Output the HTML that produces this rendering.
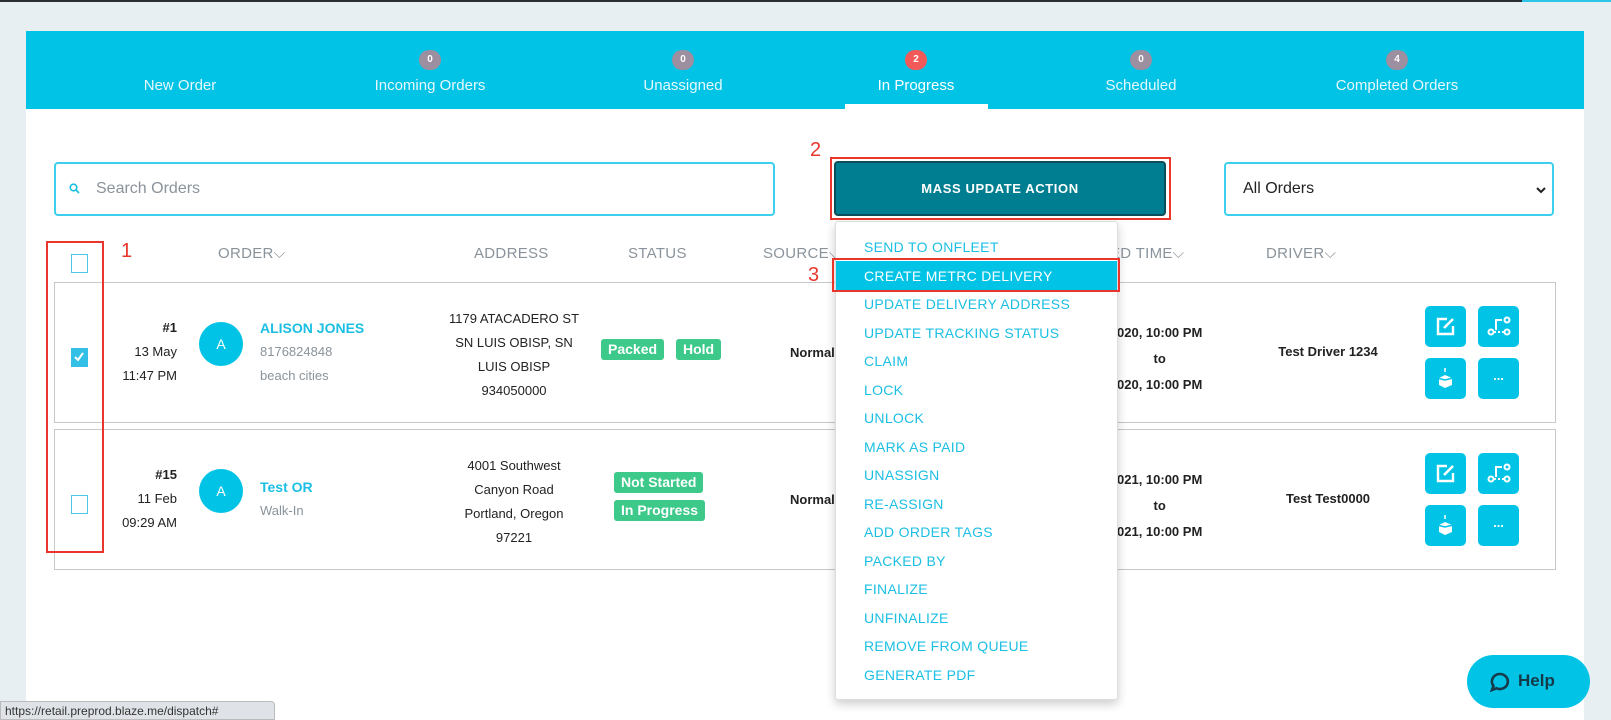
<!DOCTYPE html>
<html><head><meta charset="utf-8"><style>
*{margin:0;padding:0;box-sizing:border-box}
body{width:1611px;height:720px;overflow:hidden;background:#e8eff2;font-family:"Liberation Sans",sans-serif;position:relative}
.a{position:absolute}
.tab{position:absolute;top:31px;height:78px;text-align:center;color:#e6f8fc;font-size:15px;width:240px}
.tab .lbl{position:absolute;top:46px;left:0;right:0}
.badge{position:absolute;top:19px;left:50%;margin-left:-11px;width:22px;height:20px;border-radius:10px;background:#9b8fa0;color:#fff;font-size:10px;font-weight:bold;line-height:20px}
.hd{position:absolute;top:245px;color:#8a939b;font-size:15px;letter-spacing:.3px}
.row{position:absolute;left:54px;width:1502px;border:1px solid #c8c8c8;background:#fff}
.cb{position:absolute;width:17px;height:19px;border:1.5px solid #4cc7e6;background:#fff}
.t{position:absolute;font-size:13px;color:#222}
.av{position:absolute;width:44px;height:44px;border-radius:50%;background:#00c3e6;color:#fff;font-size:14px;text-align:center;line-height:44px}
.tag{position:absolute;background:#3cc98a;color:#fff;font-weight:bold;font-size:14px;height:21px;line-height:21px;border-radius:3px;padding:0 7px}
.btn{position:absolute;width:41px;height:41px;background:#00c3e6;border-radius:5px}
.dd{position:absolute;left:835px;top:221px;width:283px;height:479px;background:#fff;border:1px solid #ddd;border-radius:3px;box-shadow:0 4px 10px rgba(0,0,0,.2)}
.it{position:absolute;left:28px;color:#1bbfe3;font-size:14px;letter-spacing:.3px}
.red{position:absolute;border:2px solid #e8362c}
.num{position:absolute;color:#e8362c;font-size:20px}
</style></head><body>
<div class="a" style="left:0;top:0;width:1522px;height:2px;background:#2b2f33"></div>
<div class="a" style="left:1522px;top:0;width:89px;height:2px;background:#2bc5e8"></div>
<div class="a" style="left:26px;top:31px;width:1558px;height:78px;background:#00c3e6"></div>
<div class="a" style="left:26px;top:109px;width:1558px;height:611px;background:#fff"></div>

<div class="tab" style="left:60px"><div class="lbl">New Order</div></div>
<div class="tab" style="left:310px"><div class="badge">0</div><div class="lbl">Incoming Orders</div></div>
<div class="tab" style="left:563px"><div class="badge">0</div><div class="lbl">Unassigned</div></div>
<div class="tab" style="left:796px;color:#fff"><div class="badge" style="background:#f25a5a">2</div><div class="lbl">In Progress</div></div>
<div class="tab" style="left:1021px"><div class="badge">0</div><div class="lbl">Scheduled</div></div>
<div class="tab" style="left:1277px"><div class="badge">4</div><div class="lbl">Completed Orders</div></div>
<div class="a" style="left:845px;top:104px;width:143px;height:5px;background:#fff"></div>

<div class="a" style="left:54px;top:162px;width:721px;height:54px;border:2px solid #3dd0ee;border-radius:4px"></div>
<svg class="a" style="left:69px;top:183px" width="11" height="11" viewBox="0 0 11 11"><circle cx="4.5" cy="4.5" r="3.3" fill="none" stroke="#1bbfe3" stroke-width="1.6"/><path d="M7 7l3 3" stroke="#1bbfe3" stroke-width="1.8"/></svg>
<div class="a" style="left:96px;top:180px;color:#8a939b;font-size:16px">Search Orders</div>

<div class="a" style="left:834px;top:161px;width:332px;height:55px;background:#007e91;border:2px solid #0b4d5a;border-radius:4px;color:#fff;font-weight:bold;font-size:13px;letter-spacing:.6px;text-align:center;line-height:51px">MASS UPDATE ACTION</div>
<div class="red" style="left:830px;top:157px;width:341px;height:63px"></div>
<div class="num" style="left:810px;top:139px">2</div>

<div class="a" style="left:1224px;top:162px;width:330px;height:54px;border:2px solid #3dd0ee;border-radius:4px;background:#fff"></div>
<div class="a" style="left:1243px;top:180px;color:#222;font-size:16px">All Orders</div>
<svg class="a" style="left:1536px;top:186px" width="10" height="8" viewBox="0 0 10 8"><path d="M1 2l4 4 4-4" fill="none" stroke="#222" stroke-width="2"/></svg>

<div class="cb" style="left:71px;top:254px"></div>
<div class="hd" style="left:218px">ORDER⌵</div>
<div class="hd" style="left:474px">ADDRESS</div>
<div class="hd" style="left:628px">STATUS</div>
<div class="hd" style="left:763px">SOURCE⌵</div>
<div class="hd" style="left:1110px">ED TIME⌵</div>
<div class="hd" style="left:1266px">DRIVER⌵</div>

<div class="row" style="top:282px;height:141px"></div>
<div class="row" style="top:429px;height:141px"></div>

<!-- row 1 -->
<div class="cb" style="left:71px;top:348px;background:#34bfe6;border-color:#34bfe6"><svg width="14" height="16" viewBox="0 0 14 16" style="position:absolute;left:0;top:0"><path d="M3 8l3 3 5-7" fill="none" stroke="#fff" stroke-width="2"/></svg></div>
<div class="t" style="left:120px;top:320px;width:57px;text-align:right;font-weight:bold">#1</div>
<div class="t" style="left:100px;top:344px;width:77px;text-align:right">13 May</div>
<div class="t" style="left:100px;top:368px;width:77px;text-align:right">11:47 PM</div>
<div class="av" style="left:199px;top:322px">A</div>
<div class="t" style="left:260px;top:320px;color:#1bbfe3;font-weight:bold;font-size:14px">ALISON JONES</div>
<div class="t" style="left:260px;top:344px;color:#8a939b">8176824848</div>
<div class="t" style="left:260px;top:368px;color:#8a939b">beach cities</div>
<div class="t" style="left:414px;top:307px;width:200px;text-align:center;line-height:24px">1179 ATACADERO ST<br>SN LUIS OBISP, SN<br>LUIS OBISP<br>934050000</div>
<div class="tag" style="left:601px;top:339px">Packed</div>
<div class="tag" style="left:676px;top:339px">Hold</div>
<div class="t" style="left:790px;top:345px;font-weight:bold">Normal</div>
<div class="t" style="left:1117px;top:320px;font-weight:bold;line-height:26px;text-align:center">020, 10:00 PM<br>to<br>020, 10:00 PM</div>
<div class="t" style="left:1228px;top:344px;width:200px;text-align:center;font-weight:bold">Test Driver 1234</div>

<!-- row 2 -->
<div class="cb" style="left:71px;top:495px"></div>
<div class="t" style="left:120px;top:467px;width:57px;text-align:right;font-weight:bold">#15</div>
<div class="t" style="left:100px;top:491px;width:77px;text-align:right">11 Feb</div>
<div class="t" style="left:100px;top:515px;width:77px;text-align:right">09:29 AM</div>
<div class="av" style="left:199px;top:469px">A</div>
<div class="t" style="left:260px;top:479px;color:#1bbfe3;font-weight:bold;font-size:14px">Test OR</div>
<div class="t" style="left:260px;top:503px;color:#8a939b">Walk-In</div>
<div class="t" style="left:414px;top:454px;width:200px;text-align:center;line-height:24px">4001 Southwest<br>Canyon Road<br>Portland, Oregon<br>97221</div>
<div class="tag" style="left:614px;top:472px">Not Started</div>
<div class="tag" style="left:614px;top:500px">In Progress</div>
<div class="t" style="left:790px;top:492px;font-weight:bold">Normal</div>
<div class="t" style="left:1117px;top:467px;font-weight:bold;line-height:26px;text-align:center">021, 10:00 PM<br>to<br>021, 10:00 PM</div>
<div class="t" style="left:1228px;top:491px;width:200px;text-align:center;font-weight:bold">Test Test0000</div>

<!-- buttons -->
<div class="btn" style="left:1425px;top:306px"><svg width="41" height="41" viewBox="0 0 41 41"><path d="M22 13h-9v15h15v-8" fill="none" stroke="#fff" stroke-width="2.4"/><path d="M19 22l9-9" stroke="#fff" stroke-width="2.6"/></svg></div>
<div class="btn" style="left:1478px;top:306px"><svg width="41" height="41" viewBox="0 0 41 41" fill="none" stroke="#fff" stroke-width="2"><circle cx="13" cy="26" r="2.5"/><circle cx="29" cy="26" r="2.5"/><circle cx="29" cy="14" r="2.5"/><path d="M16 26h2m2 0h2m2 0h2M18 24v-10h6"/></svg></div>
<div class="btn" style="left:1425px;top:358px"><svg width="41" height="41" viewBox="0 0 41 41"><path d="M14 20l6-3 7 3v7l-7 3-6-3z" fill="#fff"/><path d="M20 14v-4" stroke="#fff" stroke-width="1.5"/><path d="M12 20l8 2 8-2" stroke="#00c3e6" stroke-width="1.5" fill="none"/></svg></div>
<div class="btn" style="left:1478px;top:358px;color:#fff;font-weight:bold;font-size:13px;text-align:center;line-height:36px">...</div>
<div class="btn" style="left:1425px;top:453px"><svg width="41" height="41" viewBox="0 0 41 41"><path d="M22 13h-9v15h15v-8" fill="none" stroke="#fff" stroke-width="2.4"/><path d="M19 22l9-9" stroke="#fff" stroke-width="2.6"/></svg></div>
<div class="btn" style="left:1478px;top:453px"><svg width="41" height="41" viewBox="0 0 41 41" fill="none" stroke="#fff" stroke-width="2"><circle cx="13" cy="26" r="2.5"/><circle cx="29" cy="26" r="2.5"/><circle cx="29" cy="14" r="2.5"/><path d="M16 26h2m2 0h2m2 0h2M18 24v-10h6"/></svg></div>
<div class="btn" style="left:1425px;top:505px"><svg width="41" height="41" viewBox="0 0 41 41"><path d="M14 20l6-3 7 3v7l-7 3-6-3z" fill="#fff"/><path d="M20 14v-4" stroke="#fff" stroke-width="1.5"/><path d="M12 20l8 2 8-2" stroke="#00c3e6" stroke-width="1.5" fill="none"/></svg></div>
<div class="btn" style="left:1478px;top:505px;color:#fff;font-weight:bold;font-size:13px;text-align:center;line-height:36px">...</div>

<div class="red" style="left:46px;top:241px;width:58px;height:312px"></div>
<div class="num" style="left:121px;top:240px">1</div>

<!-- dropdown -->
<div class="dd">
<div class="a" style="left:0;top:39px;width:281px;height:29px;background:#00c3e6"></div>
<div class="it" style="top:17px">SEND TO ONFLEET</div>
<div class="it" style="top:46px;color:#fff">CREATE METRC DELIVERY</div>
<div class="it" style="top:74px">UPDATE DELIVERY ADDRESS</div>
<div class="it" style="top:103px">UPDATE TRACKING STATUS</div>
<div class="it" style="top:131px">CLAIM</div>
<div class="it" style="top:160px">LOCK</div>
<div class="it" style="top:188px">UNLOCK</div>
<div class="it" style="top:217px">MARK AS PAID</div>
<div class="it" style="top:245px">UNASSIGN</div>
<div class="it" style="top:274px">RE-ASSIGN</div>
<div class="it" style="top:302px">ADD ORDER TAGS</div>
<div class="it" style="top:331px">PACKED BY</div>
<div class="it" style="top:359px">FINALIZE</div>
<div class="it" style="top:388px">UNFINALIZE</div>
<div class="it" style="top:416px">REMOVE FROM QUEUE</div>
<div class="it" style="top:445px">GENERATE PDF</div>
</div>
<div class="red" style="left:832px;top:258px;width:288px;height:34px"></div>
<div class="num" style="left:808px;top:264px">3</div>

<div class="a" style="left:1467px;top:655px;width:123px;height:53px;border-radius:27px;background:#00c3e6"></div>
<svg class="a" style="left:1489px;top:671px" width="22" height="22" viewBox="0 0 22 22"><path d="M11 3a8 7.5 0 1 1-3.5 14.3L3 19l1.5-4A8 7.5 0 0 1 11 3z" fill="none" stroke="#163a4a" stroke-width="2.6"/></svg>
<div class="a" style="left:1518px;top:671px;color:#163a4a;font-weight:bold;font-size:17px">Help</div>

<div class="a" style="left:0;top:701px;width:275px;height:19px;background:#dfe3e8;border:1px solid #bbb;border-radius:0 4px 0 0;font-size:12px;color:#333;padding:2px 4px">https://retail.preprod.blaze.me/dispatch#</div>
</body></html>
